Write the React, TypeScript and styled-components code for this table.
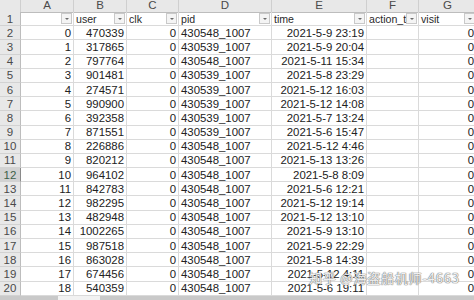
import React from "react";
import styled, { createGlobalStyle } from "styled-components";

const GlobalStyle = createGlobalStyle`
  html, body { margin: 0; padding: 0; background: #ffffff; }
  body { font-family: "Liberation Sans", Arial, sans-serif; }
  * { box-sizing: border-box; }
`;

const COLS = "21px 53px 53px 52px 93px 95px 52px 58px";
const ROW_H = 14.2;

const Page = styled.div`
  position: relative;
  width: 474px;
  height: 300px;
  overflow: hidden;
  background: #ffffff;
  display: flex;
  flex-direction: column;
`;

const Sheet = styled.div`
  display: flex;
  flex-direction: column;
  width: 477px;
`;

const Row = styled.div<{ $h: number }>`
  display: grid;
  grid-template-columns: ${COLS};
  height: ${(p) => p.$h}px;
`;

const ColHead = styled.div`
  background: #e8e8e8;
  color: #4a4a4a;
  font-size: 11.5px;
  line-height: 1;
  display: flex;
  align-items: center;
  justify-content: center;
  border-right: 1px solid #cfcfcf;
  border-bottom: 1px solid #bdbdbd;
`;

const RowHead = styled.div<{ $selected?: boolean }>`
  background: ${(p) => (p.$selected ? "#d2d2d2" : "#e8e8e8")};
  color: ${(p) => (p.$selected ? "#3d5f49" : "#4a4a4a")};
  font-size: 11.5px;
  display: flex;
  align-items: center;
  justify-content: center;
  border-bottom: 1px solid #d2d2d2;
  border-right: 1px solid ${(p) => (p.$selected ? "#8a8a8a" : "#bdbdbd")};
`;

const Cell = styled.div<{ $align?: "left" | "right" }>`
  display: flex;
  align-items: center;
  justify-content: ${(p) => (p.$align === "left" ? "flex-start" : "flex-end")};
  padding: 0 2px 0 2px;
  font-size: 11.4px;
  color: #222222;
  white-space: nowrap;
  overflow: hidden;
  border-right: 1px solid #dadada;
  border-bottom: 1px solid #dadada;
`;

const FilterCell = styled(Cell)`
  justify-content: flex-start;
  padding: 0 1px 0 2px;
  color: #2a2a2a;
`;

const FilterLabel = styled.span`
  flex: 1 1 auto;
  min-width: 0;
  font-size: 10.6px;
  white-space: nowrap;
  overflow: visible;
`;

const FilterButton = styled.span`
  position: relative;
  flex: none;
  width: 11px;
  height: 11px;
  border: 1px solid #c9c9c9;
  background: #f4f4f4;
  display: flex;
  align-items: center;
  justify-content: center;
`;

const Caret = styled.span`
  width: 0;
  height: 0;
  border-left: 2px solid transparent;
  border-right: 2px solid transparent;
  border-top: 2px solid #6a6a6a;
`;

const BottomBar = styled.div`
  display: flex;
  height: 4px;
  margin-top: auto;
  background: #c9c9c9;
`;

const BarSegment = styled.div<{ $w: number; $light?: boolean }>`
  width: ${(p) => p.$w}px;
  background: ${(p) => (p.$light ? "#f2f2f2" : "#c9c9c9")};
`;

const Watermark = styled.div`
  position: absolute;
  left: 309px;
  top: 269px;
  font-family: "Noto Sans CJK SC", "Liberation Sans", sans-serif;
  font-size: 13px;
  line-height: 17px;
  letter-spacing: 0.8px;
  color: rgba(255, 255, 255, 0.9);
  text-shadow: 0 0 1px #7f7f7f, 0 0 1px #7f7f7f, 0 0 1px #7f7f7f;
  white-space: nowrap;
  pointer-events: none;
`;

const headers = ["user", "clk", "pid", "time", "action_t", "visit"];

const data: [number, string, string, string][] = [
  [0, "470339", "430548_1007", "2021-5-9 23:19"],
  [1, "317865", "430539_1007", "2021-5-9 20:04"],
  [2, "797764", "430548_1007", "2021-5-11 15:34"],
  [3, "901481", "430539_1007", "2021-5-8 23:29"],
  [4, "274571", "430539_1007", "2021-5-12 16:03"],
  [5, "990900", "430539_1007", "2021-5-12 14:08"],
  [6, "392358", "430539_1007", "2021-5-7 13:24"],
  [7, "871551", "430539_1007", "2021-5-6 15:47"],
  [8, "226886", "430548_1007", "2021-5-12 4:46"],
  [9, "820212", "430548_1007", "2021-5-13 13:26"],
  [10, "964102", "430548_1007", "2021-5-8 8:09"],
  [11, "842783", "430548_1007", "2021-5-6 12:21"],
  [12, "982295", "430548_1007", "2021-5-12 19:14"],
  [13, "482948", "430548_1007", "2021-5-12 13:10"],
  [14, "1002265", "430548_1007", "2021-5-9 13:10"],
  [15, "987518", "430548_1007", "2021-5-9 22:29"],
  [16, "863028", "430548_1007", "2021-5-8 14:39"],
  [17, "674456", "430548_1007", "2021-5-12 4:11"],
  [18, "540359", "430548_1007", "2021-5-6 19:11"],
];

export default function App() {
  return (
    <>
      <GlobalStyle />
      <Page>
        <Sheet>
          <Row $h={12}>
            <ColHead />
            {["A", "B", "C", "D", "E", "F", "G"].map((l) => (
              <ColHead key={l}>{l}</ColHead>
            ))}
          </Row>
          <Row $h={ROW_H}>
            <RowHead>1</RowHead>
            <FilterCell>
              <FilterLabel />
              <FilterButton>
                <Caret />
              </FilterButton>
            </FilterCell>
            {headers.map((h) => (
              <FilterCell key={h}>
                <FilterLabel>{h}</FilterLabel>
                <FilterButton>
                  <Caret />
                </FilterButton>
              </FilterCell>
            ))}
          </Row>
          {data.map(([idx, user, pid, time], i) => (
            <Row $h={ROW_H} key={idx}>
              <RowHead $selected={i + 2 === 12}>{i + 2}</RowHead>
              <Cell>{idx}</Cell>
              <Cell>{user}</Cell>
              <Cell>0</Cell>
              <Cell $align="left">{pid}</Cell>
              <Cell>{time}</Cell>
              <Cell />
              <Cell>0</Cell>
            </Row>
          ))}
        </Sheet>
        <BottomBar>
          <BarSegment $w={58} />
          <BarSegment $w={42} $light />
        </BottomBar>
        <Watermark>知乎 @海盗船机师-4663</Watermark>
      </Page>
    </>
  );
}
